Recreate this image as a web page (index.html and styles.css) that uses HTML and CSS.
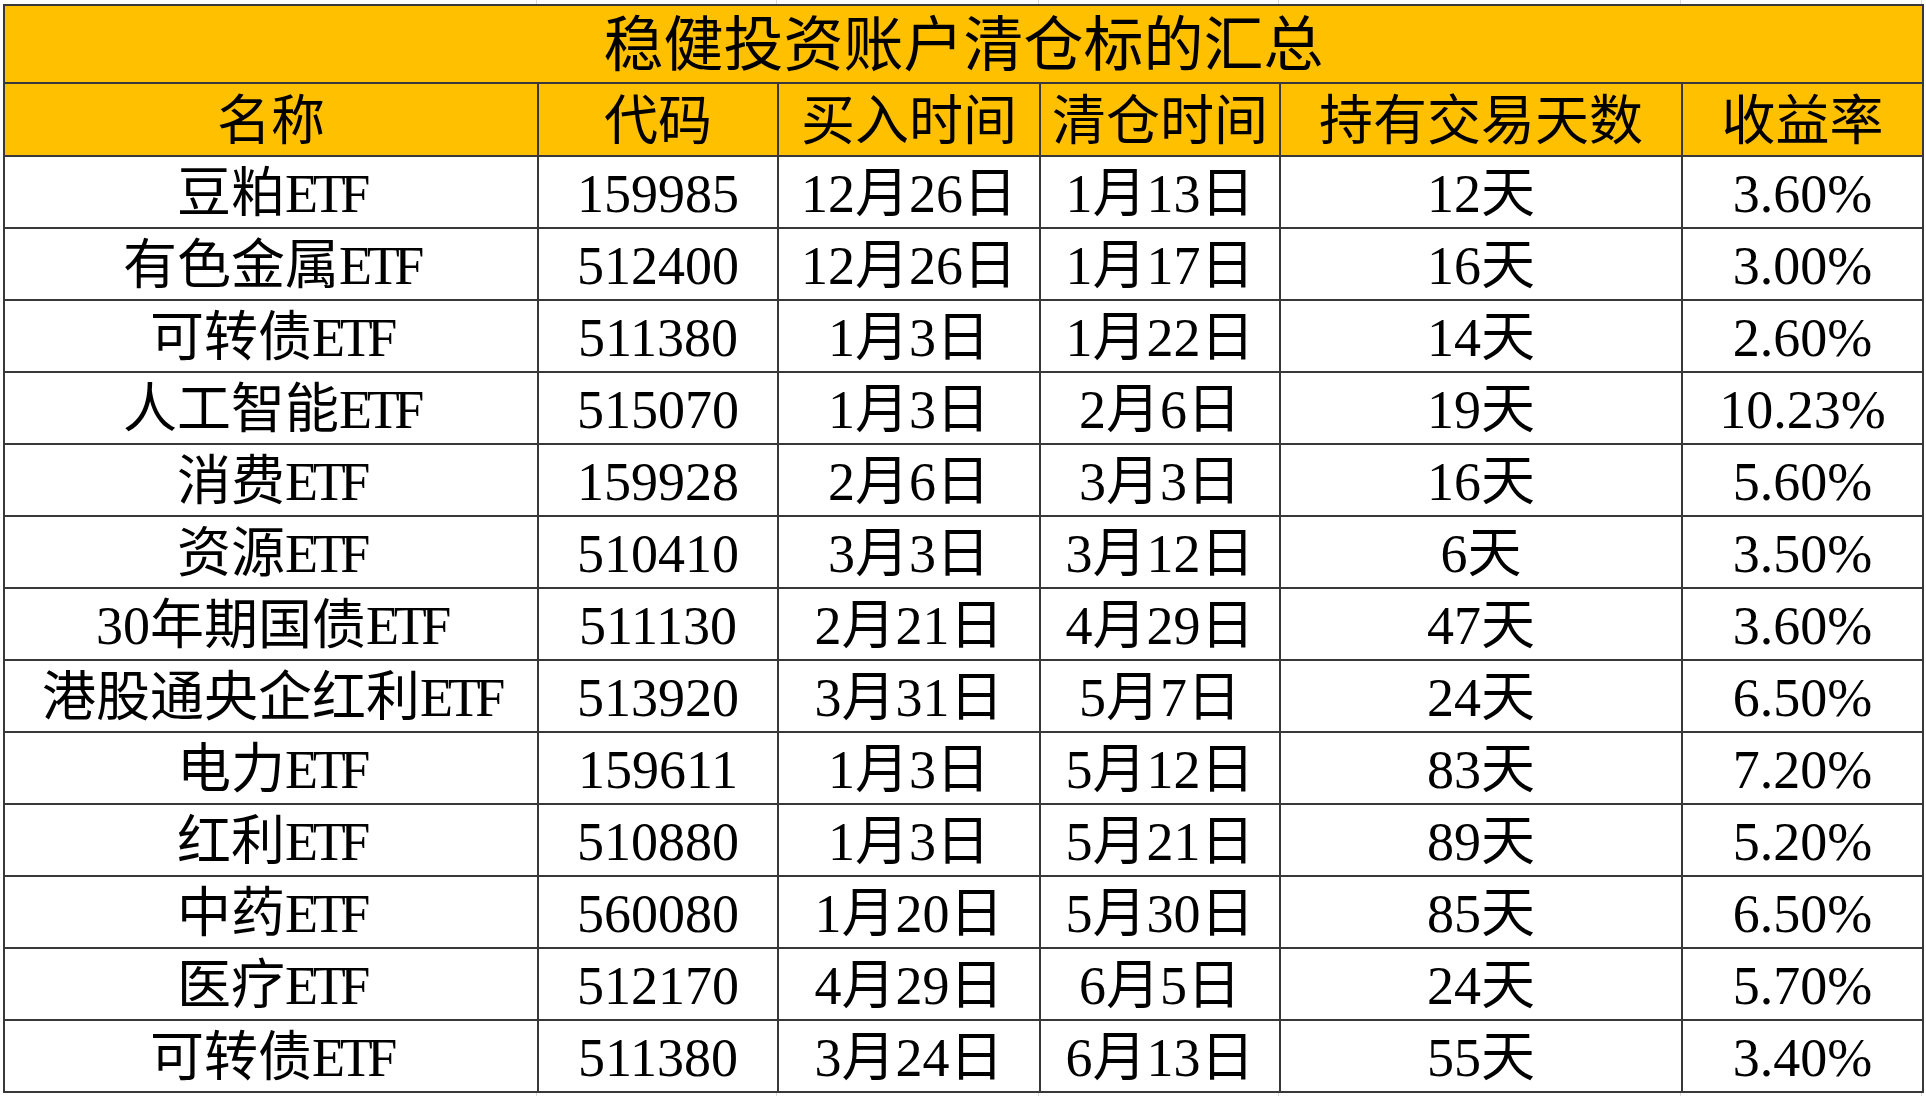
FILE: index.html
```html
<!DOCTYPE html>
<html lang="zh-CN">
<head>
<meta charset="utf-8">
<title>稳健投资账户清仓标的汇总</title>
<link rel="stylesheet" href="styles.css">
</head>
<body>
<div class="sheet">
  <div class="gridstrip">
    <span></span><span></span><span></span><span></span><span></span><span></span>
  </div>
  <table class="summary">
    <colgroup>
      <col class="c-name"><col class="c-code"><col class="c-buy"><col class="c-sell"><col class="c-days"><col class="c-rate">
    </colgroup>
    <thead>
      <tr class="title-row"><th colspan="6">稳健投资账户清仓标的汇总</th></tr>
      <tr class="head-row">
        <th>名称</th><th>代码</th><th>买入时间</th><th>清仓时间</th><th>持有交易天数</th><th>收益率</th>
      </tr>
    </thead>
    <tbody>
      <tr><td>豆粕<span class="lat">ETF</span></td><td>159985</td><td>12月26日</td><td>1月13日</td><td>12天</td><td>3.60%</td></tr>
      <tr><td>有色金属<span class="lat">ETF</span></td><td>512400</td><td>12月26日</td><td>1月17日</td><td>16天</td><td>3.00%</td></tr>
      <tr><td>可转债<span class="lat">ETF</span></td><td>511380</td><td>1月3日</td><td>1月22日</td><td>14天</td><td>2.60%</td></tr>
      <tr><td>人工智能<span class="lat">ETF</span></td><td>515070</td><td>1月3日</td><td>2月6日</td><td>19天</td><td>10.23%</td></tr>
      <tr><td>消费<span class="lat">ETF</span></td><td>159928</td><td>2月6日</td><td>3月3日</td><td>16天</td><td>5.60%</td></tr>
      <tr><td>资源<span class="lat">ETF</span></td><td>510410</td><td>3月3日</td><td>3月12日</td><td>6天</td><td>3.50%</td></tr>
      <tr><td>30年期国债<span class="lat">ETF</span></td><td>511130</td><td>2月21日</td><td>4月29日</td><td>47天</td><td>3.60%</td></tr>
      <tr><td>港股通央企红利<span class="lat">ETF</span></td><td>513920</td><td>3月31日</td><td>5月7日</td><td>24天</td><td>6.50%</td></tr>
      <tr><td>电力<span class="lat">ETF</span></td><td>159611</td><td>1月3日</td><td>5月12日</td><td>83天</td><td>7.20%</td></tr>
      <tr><td>红利<span class="lat">ETF</span></td><td>510880</td><td>1月3日</td><td>5月21日</td><td>89天</td><td>5.20%</td></tr>
      <tr><td>中药<span class="lat">ETF</span></td><td>560080</td><td>1月20日</td><td>5月30日</td><td>85天</td><td>6.50%</td></tr>
      <tr><td>医疗<span class="lat">ETF</span></td><td>512170</td><td>4月29日</td><td>6月5日</td><td>24天</td><td>5.70%</td></tr>
      <tr><td>可转债<span class="lat">ETF</span></td><td>511380</td><td>3月24日</td><td>6月13日</td><td>55天</td><td>3.40%</td></tr>
    </tbody>
  </table>
  <div class="gridstrip">
    <span></span><span></span><span></span><span></span><span></span><span></span>
  </div>
</div>
</body>
</html>
```
FILE: styles.css
```css
html, body {
  margin: 0;
  padding: 0;
  background: #ffffff;
}

.sheet {
  padding-left: 3px;
  width: 1919px;
}

.gridstrip {
  display: grid;
  grid-template-columns: 534px 240px 262px 240px 402px 241px;
  height: 4px;
}

.gridstrip span {
  border-right: 1px solid #d9d9d9;
}

.summary {
  border-collapse: collapse;
  table-layout: fixed;
  width: 1919px;
  font-family: "Liberation Serif", "Noto Sans CJK SC", serif;
  color: #000000;
}

.c-name { width: 534px; }
.c-code { width: 240px; }
.c-buy  { width: 262px; }
.c-sell { width: 240px; }
.c-days { width: 402px; }
.c-rate { width: 241px; }

.summary th,
.summary td {
  border: 2px solid #383838;
  padding: 0;
  text-align: center;
  vertical-align: middle;
  white-space: nowrap;
  overflow: hidden;
  font-weight: normal;
  font-size: 54px;
  line-height: 1;
}

.title-row {
  height: 78px;
}

.title-row th {
  background: #ffc000;
  font-size: 60px;
  padding-top: 4px;
}

.head-row {
  height: 73px;
}

.head-row th {
  background: #ffc000;
  padding-top: 4px;
}

.summary tbody tr {
  height: 72px;
}

.summary tbody td {
  padding-top: 4px;
}

.lat {
  letter-spacing: -0.1em;
}
```
